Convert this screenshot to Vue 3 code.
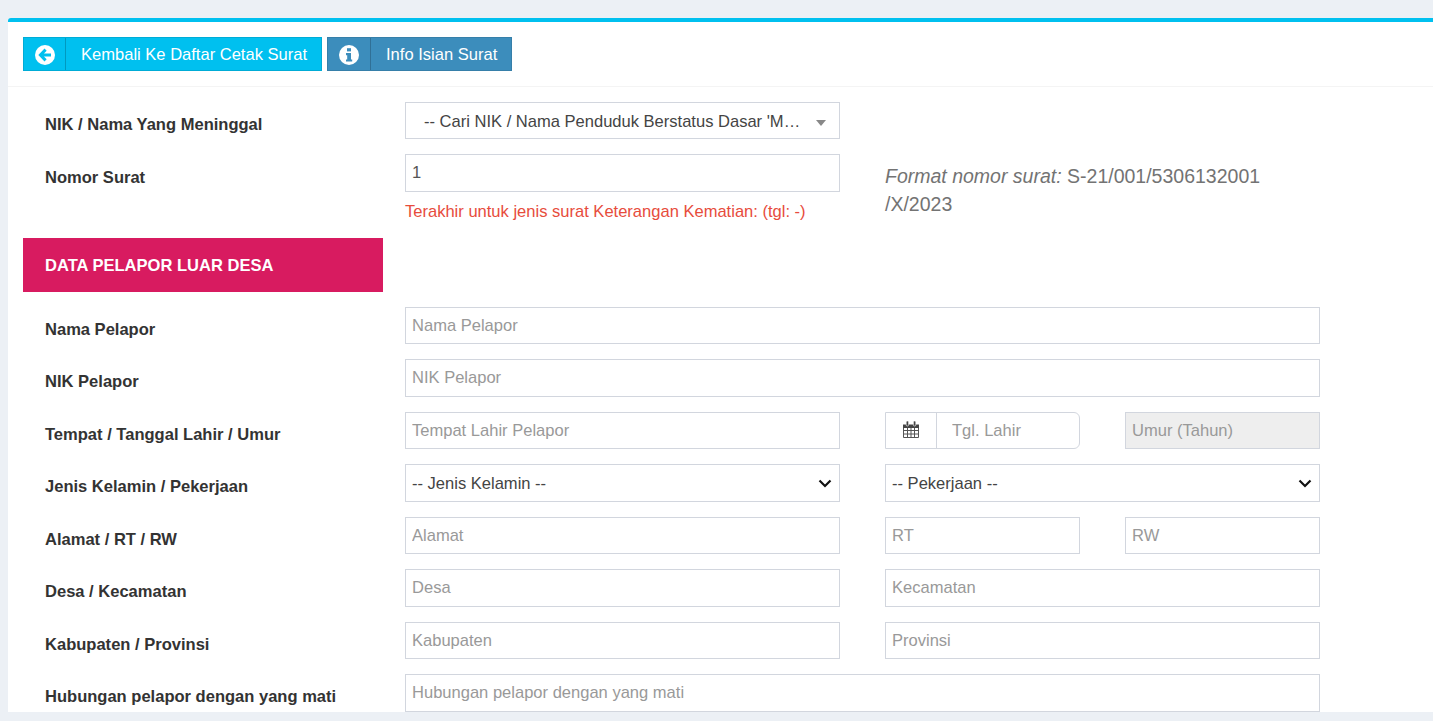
<template>
  <div class="card">
    <div class="card-header">
      <a class="btn btn-cyan">
        <span class="btn-icon">
          <svg width="20" height="20" viewBox="0 0 20 20">
            <circle cx="10" cy="10" r="10" fill="#fff" />
            <path d="M10.6 4.6 L5.4 10 L10.6 15.4 M6 10 H16" fill="none" stroke="#00c0ef" stroke-width="3" />
          </svg>
        </span>
        <span class="btn-text">Kembali Ke Daftar Cetak Surat</span>
      </a>
      <a class="btn btn-blue">
        <span class="btn-icon">
          <svg width="20" height="20" viewBox="0 0 20 20">
            <circle cx="10" cy="10" r="10" fill="#fff" />
            <rect x="8" y="3.2" width="4" height="3.2" fill="#3c8dbc" />
            <path d="M7 8 H12 V14.4 H13.2 V16.6 H7 V14.4 H8.2 V10.2 H7 Z" fill="#3c8dbc" />
          </svg>
        </span>
        <span class="btn-text">Info Isian Surat</span>
      </a>
    </div>

    <div class="card-body">
      <div class="row">
        <label class="row-label">NIK / Nama Yang Meninggal</label>
        <div class="select2">
          <span class="select2-text">-- Cari NIK / Nama Penduduk Berstatus Dasar 'Meninggal' --</span>
          <span class="select2-caret"></span>
        </div>
      </div>

      <div class="row row-nomor">
        <label class="row-label label-nomor">Nomor Surat</label>
        <div class="col-nomor">
          <input class="input" type="text" value="1" />
          <p class="help-red">Terakhir untuk jenis surat Keterangan Kematian: (tgl: -)</p>
        </div>
        <p class="format-note"><i>Format nomor surat:</i> S-21/001/5306132001<br />/X/2023</p>
      </div>

      <div class="section-title">DATA PELAPOR LUAR DESA</div>

      <div class="row">
        <label class="row-label">Nama Pelapor</label>
        <input class="input wide" type="text" placeholder="Nama Pelapor" />
      </div>
      <div class="row">
        <label class="row-label">NIK Pelapor</label>
        <input class="input wide" type="text" placeholder="NIK Pelapor" />
      </div>
      <div class="row">
        <label class="row-label">Tempat / Tanggal Lahir / Umur</label>
        <input class="input half" type="text" placeholder="Tempat Lahir Pelapor" />
        <div class="date-group">
          <span class="date-addon">
            <svg width="16" height="17" viewBox="0 0 16 17">
              <path d="M.5 4.5 H15.5 V16.5 H.5 Z M.5 9.5 H15.5 M.5 13 H15.5 M4.5 7 V16.5 M8 7 V16.5 M11.5 7 V16.5" fill="none" stroke="#555" stroke-width="1" />
              <rect x="0" y="3.5" width="16" height="3.5" fill="#444" />
              <rect x="3.2" y="0" width="2.4" height="5" rx="1.1" fill="#444" stroke="#fff" stroke-width="0.6" />
              <rect x="10.4" y="0" width="2.4" height="5" rx="1.1" fill="#444" stroke="#fff" stroke-width="0.6" />
            </svg>
          </span>
          <input class="date-input" type="text" placeholder="Tgl. Lahir" />
        </div>
        <input class="input small disabled" type="text" placeholder="Umur (Tahun)" disabled />
      </div>
      <div class="row">
        <label class="row-label">Jenis Kelamin / Pekerjaan</label>
        <select class="input half select"><option>-- Jenis Kelamin --</option></select>
        <select class="input half select"><option>-- Pekerjaan --</option></select>
      </div>
      <div class="row">
        <label class="row-label">Alamat / RT / RW</label>
        <input class="input half" type="text" placeholder="Alamat" />
        <input class="input small" type="text" placeholder="RT" />
        <input class="input small" type="text" placeholder="RW" />
      </div>
      <div class="row">
        <label class="row-label">Desa / Kecamatan</label>
        <input class="input half" type="text" placeholder="Desa" />
        <input class="input half" type="text" placeholder="Kecamatan" />
      </div>
      <div class="row">
        <label class="row-label">Kabupaten / Provinsi</label>
        <input class="input half" type="text" placeholder="Kabupaten" />
        <input class="input half" type="text" placeholder="Provinsi" />
      </div>
      <div class="row">
        <label class="row-label">Hubungan pelapor dengan yang mati</label>
        <input class="input wide" type="text" placeholder="Hubungan pelapor dengan yang mati" />
      </div>
    </div>
  </div>
</template>

<script setup>
</script>

<style>
html,
body {
  margin: 0;
  height: 100%;
  overflow: hidden;
  background: #ecf0f5;
}
</style>

<style scoped>
.card {
  margin: 18px 0 0 8px;
  background: #fff;
  border-top: 4px solid #00c0ef;
  border-radius: 3px 0 0 0;
  font-family: "Liberation Sans", Arial, sans-serif;
  font-size: 16.55px;
  color: #333;
}

.card-header {
  display: flex;
  gap: 5px;
  padding: 15px 15px;
  border-bottom: 1px solid #f4f4f4;
}

.btn {
  display: flex;
  height: 34px;
  box-sizing: border-box;
  color: #fff;
  border: 1px solid;
}

.btn-cyan {
  background: #00c0ef;
  border-color: #00acd6;
}

.btn-blue {
  background: #3c8dbc;
  border-color: #367fa9;
}

.btn-icon {
  width: 42px;
  flex-shrink: 0;
  display: flex;
  align-items: center;
  justify-content: center;
  padding-top: 1px;
  box-sizing: border-box;
  border-right: 1px solid rgba(0, 0, 0, 0.2);
}

.btn-blue .btn-icon {
  width: 43px;
}

.btn-text {
  padding: 0 14px 0 15px;
  line-height: 33px;
}

.card-body {
  padding: 15px 15px 0;
}

.row {
  display: flex;
  gap: 45px;
  margin-bottom: 15px;
}

.row-label {
  width: 382px;
  margin-right: -45px;
  flex-shrink: 0;
  box-sizing: border-box;
  padding: 13px 0 0 22px;
  font-weight: 700;
  line-height: 20px;
}

.label-nomor {
  padding-top: 14px;
}

.input {
  height: 37.5px;
  box-sizing: border-box;
  border: 1px solid #d2d6de;
  padding: 6.4px 6px 5.6px;
  font: inherit;
  color: #555;
  background: #fff;
  outline: none;
  border-radius: 0;
}

.input::placeholder,
.date-input::placeholder {
  color: #999;
  opacity: 1;
}

.wide {
  width: 915px;
}

.half {
  width: 435px;
}

.small {
  width: 195px;
}

.disabled {
  background: #eee;
}

.select {
  appearance: none;
  padding: 0 6px;
  color: #444;
  background: #fff url("data:image/svg+xml,%3Csvg xmlns='http://www.w3.org/2000/svg' width='14' height='9' viewBox='0 0 14 9'%3E%3Cpath d='M1.5 1.5 L7 7 L12.5 1.5' fill='none' stroke='%23111' stroke-width='2.2'/%3E%3C/svg%3E") no-repeat right 7px center;
}

.select2 {
  width: 435px;
  height: 37px;
  box-sizing: border-box;
  border: 1px solid #d2d6de;
  display: flex;
  align-items: center;
  padding: 2px 13px 0 18px;
  gap: 10px;
  color: #444;
}

.select2-text {
  flex: 1;
  min-width: 0;
  white-space: nowrap;
  overflow: hidden;
  text-overflow: ellipsis;
}

.select2-caret {
  width: 0;
  height: 0;
  margin-top: 3px;
  border-left: 5.5px solid transparent;
  border-right: 5.5px solid transparent;
  border-top: 6px solid #888;
}

.row-nomor {
  margin-bottom: 0;
  height: 84px;
}

.col-nomor {
  width: 435px;
  display: flex;
  flex-direction: column;
}

.help-red {
  margin: 10px 0 0;
  line-height: 20px;
  color: #e74c3c;
}

.format-note {
  margin: 8px 0 0;
  font-size: 19.5px;
  line-height: 28px;
  color: #737373;
}

.section-title {
  width: 360px;
  height: 54px;
  box-sizing: border-box;
  padding-left: 22px;
  margin-bottom: 14.8px;
  background: #d81b60;
  color: #fff;
  font-weight: 700;
  line-height: 55px;
}

.date-group {
  width: 195px;
  height: 37.5px;
  box-sizing: border-box;
  display: flex;
  border: 1px solid #d2d6de;
  border-radius: 0 6px 6px 0;
}

.date-addon {
  width: 51px;
  flex-shrink: 0;
  display: flex;
  align-items: center;
  justify-content: center;
  padding-bottom: 2px;
  box-sizing: border-box;
  border-right: 1px solid #d2d6de;
}

.date-input {
  flex: 1;
  min-width: 0;
  border: none;
  outline: none;
  padding: 0 15px;
  font: inherit;
  background: transparent;
  border-radius: 0 6px 6px 0;
}
</style>
